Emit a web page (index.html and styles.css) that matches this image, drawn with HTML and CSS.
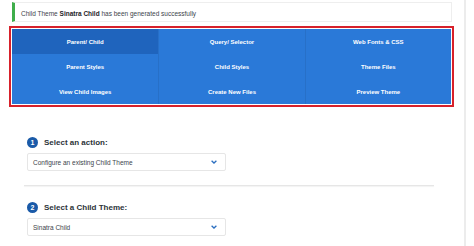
FILE: index.html
```html
<!DOCTYPE html>
<html>
<head>
<meta charset="utf-8">
<link rel="stylesheet" href="styles.css">
</head>
<body>
<div class="page">
  <div class="notice">Child Theme <b>Sinatra Child</b> has been generated successfully</div>
  <div class="frame">
    <div class="tabs">
      <div class="tab active">Parent/ Child</div>
      <div class="tab">Query/ Selector</div>
      <div class="tab">Web Fonts &amp; CSS</div>
      <div class="tab">Parent Styles</div>
      <div class="tab">Child Styles</div>
      <div class="tab">Theme Files</div>
      <div class="tab">View Child Images</div>
      <div class="tab">Create New Files</div>
      <div class="tab">Preview Theme</div>
    </div>
  </div>
  <div class="content">
    <div class="step first">
      <div class="heading"><span class="num">1</span>Select an action:</div>
      <div class="select">Configure an existing Child Theme
        <svg class="chev" width="6" height="4" viewBox="0 0 6 4"><path d="M0.6 0.7 L3 3 L5.4 0.7" fill="none" stroke="#2c6fc0" stroke-width="1.3"/></svg>
      </div>
    </div>
    <div class="divider"></div>
    <div class="step">
      <div class="heading"><span class="num">2</span>Select a Child Theme:</div>
      <div class="select">Sinatra Child
        <svg class="chev" width="6" height="4" viewBox="0 0 6 4"><path d="M0.6 0.7 L3 3 L5.4 0.7" fill="none" stroke="#2c6fc0" stroke-width="1.3"/></svg>
      </div>
    </div>
  </div>
</div>
</body>
</html>
```
FILE: styles.css
```css
html, body {
  margin: 0;
  padding: 0;
  background: #ffffff;
}
body {
  font-family: "Liberation Sans", Arial, sans-serif;
  width: 474px;
  height: 246px;
  overflow: hidden;
}
.page {
  width: 466px;
  height: 246px;
  border-right: 2px solid #ececec;
  padding-top: 2px;
  box-sizing: border-box;
}
.notice {
  margin-left: 12px;
  width: 440px;
  height: 20px;
  box-sizing: border-box;
  border: 1px solid #eeeeee;
  border-left: 3px solid #3fae4b;
  padding-left: 6px;
  padding-top: 1px;
  font-size: 6.5px;
  line-height: 19px;
  color: #3c434a;
}
.notice b {
  color: #1d2327;
}
.frame {
  margin: 4px 0 0 9px;
  width: 445px;
  box-sizing: border-box;
  border: 2px solid #d7212b;
  padding: 1px;
  background: #ffffff;
}
.tabs {
  display: grid;
  grid-template-columns: repeat(3, 1fr);
  grid-auto-rows: 25px;
  background: #2a79d8;
}
.tab {
  display: flex;
  align-items: center;
  justify-content: center;
  color: #ffffff;
  font-weight: bold;
  font-size: 6px;
  border-left: 1px solid rgba(0, 0, 0, 0.07);
}
.tab:nth-child(3n+1) {
  border-left: none;
}
.tab.active {
  background: #1f64bd;
}
.content {
  padding-left: 27px;
}
.step.first {
  margin-top: 30px;
}
.heading {
  display: flex;
  align-items: center;
  height: 11px;
  font-weight: bold;
  font-size: 8px;
  color: #2c3338;
}
.num {
  width: 11px;
  height: 11px;
  border-radius: 50%;
  background: #1a5aa8;
  color: #ffffff;
  font-size: 7px;
  display: flex;
  align-items: center;
  justify-content: center;
  margin-right: 6px;
}
.select {
  margin-top: 5px;
  width: 199px;
  height: 18px;
  box-sizing: border-box;
  border: 1px solid #e6e6e6;
  border-radius: 2px;
  padding: 0 0 0 5px;
  display: flex;
  align-items: center;
  justify-content: space-between;
  font-size: 6.5px;
  color: #3c434a;
  padding-right: 8px;
}
.divider {
  margin: 14px 0 16px -3px;
  width: 410px;
  height: 1px;
  background: #e6e6e6;
  box-shadow: 0 1px 1px #f2f2f2;
}
```
